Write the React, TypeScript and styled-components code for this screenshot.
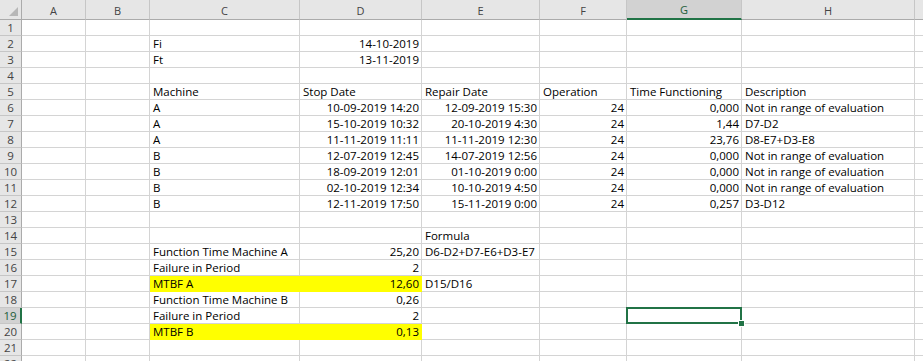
import * as React from "react";
import styled, { createGlobalStyle, css } from "styled-components";

const GlobalStyle = createGlobalStyle`
  html, body {
    margin: 0;
    padding: 0;
    background: #fff;
    overflow: hidden;
  }
`;

const COLS = ["A", "B", "C", "D", "E", "F", "G", "H", "I"];
const WIDTHS = [64, 64, 150, 122, 118, 87, 115, 173, 60];
const SELECTED_COL = "G";
const SELECTED_ROW = 19;
const GREEN = "#217346";

type Cell = { v: string; right?: boolean; fill?: string };
type RowData = { [col: string]: Cell };

const YELLOW = "#ffff00";

const t = (v: string): Cell => ({ v });
const n = (v: string): Cell => ({ v, right: true });

const DATA: { [row: number]: RowData } = {
  2: { C: t("Fi"), D: n("14-10-2019") },
  3: { C: t("Ft"), D: n("13-11-2019") },
  5: {
    C: t("Machine"),
    D: t("Stop Date"),
    E: t("Repair Date"),
    F: t("Operation"),
    G: t("Time Functioning"),
    H: t("Description"),
  },
  6: { C: t("A"), D: n("10-09-2019 14:20"), E: n("12-09-2019 15:30"), F: n("24"), G: n("0,000"), H: t("Not in range of evaluation") },
  7: { C: t("A"), D: n("15-10-2019 10:32"), E: n("20-10-2019 4:30"), F: n("24"), G: n("1,44"), H: t("D7-D2") },
  8: { C: t("A"), D: n("11-11-2019 11:11"), E: n("11-11-2019 12:30"), F: n("24"), G: n("23,76"), H: t("D8-E7+D3-E8") },
  9: { C: t("B"), D: n("12-07-2019 12:45"), E: n("14-07-2019 12:56"), F: n("24"), G: n("0,000"), H: t("Not in range of evaluation") },
  10: { C: t("B"), D: n("18-09-2019 12:01"), E: n("01-10-2019 0:00"), F: n("24"), G: n("0,000"), H: t("Not in range of evaluation") },
  11: { C: t("B"), D: n("02-10-2019 12:34"), E: n("10-10-2019 4:50"), F: n("24"), G: n("0,000"), H: t("Not in range of evaluation") },
  12: { C: t("B"), D: n("12-11-2019 17:50"), E: n("15-11-2019 0:00"), F: n("24"), G: n("0,257"), H: t("D3-D12") },
  14: { E: t("Formula") },
  15: { C: t("Function Time Machine A"), D: n("25,20"), E: t("D6-D2+D7-E6+D3-E7") },
  16: { C: t("Failure in Period"), D: n("2") },
  17: { C: { v: "MTBF A", fill: YELLOW }, D: { v: "12,60", right: true, fill: YELLOW }, E: t("D15/D16") },
  18: { C: t("Function Time Machine B"), D: n("0,26") },
  19: { C: t("Failure in Period"), D: n("2") },
  20: { C: { v: "MTBF B", fill: YELLOW }, D: { v: "0,13", right: true, fill: YELLOW } },
};

const Sheet = styled.div`
  display: grid;
  grid-template-columns: 22px ${WIDTHS.map((w) => `${w}px`).join(" ")};
  grid-template-rows: 20px;
  grid-auto-rows: 16px;
  width: 923px;
  height: 361px;
  overflow: hidden;
  font-family: "Open Sans", "Liberation Sans", sans-serif;
  font-size: 11.5px;
  color: #000;
`;

const Corner = styled.div`
  background: #e6e6e6;
  border-right: 1px solid #ababab;
  border-bottom: 1px solid #ababab;
  position: relative;
  &::after {
    content: "";
    position: absolute;
    right: 3px;
    bottom: 3px;
    width: 0;
    height: 0;
    border-left: 9px solid transparent;
    border-bottom: 9px solid #b7b7b7;
  }
`;

const ColHead = styled.div<{ $active?: boolean }>`
  display: flex;
  align-items: center;
  justify-content: center;
  background: ${(p) => (p.$active ? "#d2d2d2" : "#e6e6e6")};
  border-right: 1px solid #c6c6c6;
  border-bottom: ${(p) => (p.$active ? `2px solid ${GREEN}` : "1px solid #ababab")};
  color: ${(p) => (p.$active ? "#1e5e3a" : "#444")};
  font-size: 11px;
  padding-top: 1px;
`;

const RowHead = styled.div<{ $active?: boolean }>`
  display: flex;
  align-items: center;
  justify-content: center;
  background: ${(p) => (p.$active ? "#d2d2d2" : "#e6e6e6")};
  border-bottom: 1px solid #c6c6c6;
  border-right: ${(p) => (p.$active ? `2px solid ${GREEN}` : "1px solid #ababab")};
  color: ${(p) => (p.$active ? "#1e5e3a" : "#444")};
  font-size: 11.5px;
`;

const DataCell = styled.div<{ $right?: boolean; $fill?: string; $selected?: boolean }>`
  position: relative;
  display: flex;
  align-items: flex-end;
  justify-content: ${(p) => (p.$right ? "flex-end" : "flex-start")};
  padding: 0 2px 0 3px;
  border-right: 1px solid #d4d4d4;
  border-bottom: 1px solid #d4d4d4;
  white-space: nowrap;
  line-height: 15px;
  overflow: visible;
  z-index: 0;
  ${(p) =>
    p.$fill &&
    css`
      background: ${p.$fill};
      border-right-color: ${p.$fill};
      border-bottom-color: ${p.$fill};
    `}
  ${(p) =>
    p.$selected &&
    css`
      z-index: 2;
      &::before {
        content: "";
        position: absolute;
        left: -1px;
        top: -1px;
        right: -1px;
        bottom: -1px;
        border: 2px solid ${GREEN};
      }
      &::after {
        content: "";
        position: absolute;
        right: -4px;
        bottom: -4px;
        width: 5px;
        height: 5px;
        background: ${GREEN};
        border: 1px solid #fff;
      }
    `}
`;

const CellText = styled.span`
  position: relative;
  z-index: 1;
`;

const ROWS = Array.from({ length: 22 }, (_, i) => i + 1);

export default function App() {
  return (
    <>
      <GlobalStyle />
      <Sheet>
        <Corner />
        {COLS.map((c) => (
          <ColHead key={c} $active={c === SELECTED_COL}>
            {c !== "I" ? c : ""}
          </ColHead>
        ))}
        {ROWS.map((r) => (
          <React.Fragment key={r}>
            <RowHead $active={r === SELECTED_ROW}>{r}</RowHead>
            {COLS.map((c) => {
              const cell = DATA[r]?.[c];
              return (
                <DataCell
                  key={c}
                  $right={cell?.right}
                  $fill={cell?.fill}
                  $selected={r === SELECTED_ROW && c === SELECTED_COL}
                >
                  {cell && <CellText>{cell.v}</CellText>}
                </DataCell>
              );
            })}
          </React.Fragment>
        ))}
      </Sheet>
    </>
  );
}
